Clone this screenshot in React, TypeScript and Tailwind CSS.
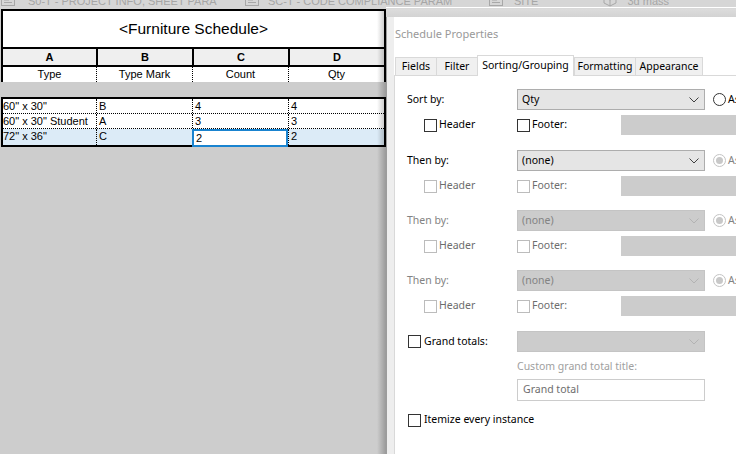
import React from 'react'

const UI = "font-['Noto_Sans','Open_Sans',sans-serif]"
const ARIAL = "font-['Liberation_Sans',Arial,sans-serif]"
const COLS = 'grid grid-cols-[93px_96px_96px_96px]'

function SheetIcon() {
  return (
    <svg width="14" height="14" viewBox="0 0 14 14" className="-mt-[7px] shrink-0">
      <rect x="0.5" y="0.5" width="13" height="12" fill="none" stroke="#a8a8a8" />
      <path d="M3 9.5h8M3 7h5" stroke="#a8a8a8" />
    </svg>
  )
}

function ViewTabs() {
  return (
    <div className={`${ARIAL} text-[11px] text-[#a6a6a6] whitespace-nowrap`}>
      <div className="h-[7px] bg-[#d6d6d6] flex items-start overflow-hidden">
        <div className="ml-[1px]"><SheetIcon /></div>
        <span className="ml-[13px] w-[189px] overflow-hidden leading-[11px] -mt-[4px]">S0-T - PROJECT INFO, SHEET PARAM</span>
        <div className="ml-[28px]"><SheetIcon /></div>
        <span className="ml-[9px] w-[193px] overflow-hidden leading-[11px] -mt-[4px]">SC-T - CODE COMPLIANCE PARAM</span>
        <div className="ml-[28px]"><SheetIcon /></div>
        <span className="ml-[11px] leading-[11px] -mt-[4px]">SITE</span>
        <div className="ml-[65px]">
          <svg width="14" height="14" viewBox="0 0 14 14" className="-mt-[7px]">
            <path d="M7 1 13 4 13 10 7 13 1 10 1 4Z M1 4 7 7 13 4 M7 7V13" fill="none" stroke="#a8a8a8" />
          </svg>
        </div>
        <span className="ml-[10px] leading-[11px] -mt-[4px]">3d mass</span>
      </div>
      <div className="h-[2px] flex">
        <div className="w-[386px] bg-[#d6d6d6]" />
        <div className="flex-1 border-t border-white bg-[#d9d9d9]" />
      </div>
    </div>
  )
}

function Schedule() {
  const rows = [
    ['60" x 30"', 'B', '4', '4'],
    ['60" x 30" Student', 'A', '3', '3'],
    ['72" x 36"', 'C', '2', '2'],
  ]
  return (
    <div className={`ml-px w-[385px] ${ARIAL} text-black`}>
      <div className="h-[40px] border-2 border-black bg-white flex items-center justify-center text-[15.5px]">
        &lt;Furniture Schedule&gt;
      </div>
      <div className={`${COLS} h-[16px] border-x-2 border-black bg-[#efefef] text-[11px] font-bold leading-[16px] text-center`}>
        {['A', 'B', 'C', 'D'].map((l, i) => (
          <div key={l} className={i ? 'border-l-2 border-black' : ''}>{l}</div>
        ))}
      </div>
      <div className={`${COLS} h-[17px] border-x-2 border-t-2 border-black bg-white text-[11px] leading-[15px] text-center`}>
        {['Type', 'Type Mark', 'Count', 'Qty'].map((l, i) => (
          <div key={l} className={i ? 'border-l border-dotted border-black' : ''}>{l}</div>
        ))}
      </div>
      <div className="h-[15px]" />
      <div className="border-2 border-black bg-white text-[11px]">
        {rows.map((r, ri) => {
          const last = ri === rows.length - 1
          return (
            <div
              key={ri}
              className={`${COLS} ${last ? 'h-[16px] bg-[#dcebf7]' : 'h-[15px] border-b border-dotted border-black'}`}
            >
              {r.map((c, ci) =>
                last && ci === 2 ? (
                  <div key={ci} className="border-2 border-[#1a84d0] bg-white pl-[2px] leading-[13px] pt-px">{c}</div>
                ) : (
                  <div key={ci} className={`leading-[14px] ${ci ? 'pl-[2px] border-l border-dotted border-black' : ''}`}>{c}</div>
                ),
              )}
            </div>
          )
        })}
      </div>
    </div>
  )
}

function Canvas() {
  return (
    <div className="relative w-[386px] shrink-0 bg-[#cdcdcd]">
      <Schedule />
      <div className="pointer-events-none absolute inset-y-0 right-0 w-[9px] bg-linear-to-r from-black/0 to-black/25" />
    </div>
  )
}

function Chevron({ off }: { off?: boolean }) {
  return (
    <svg width="10" height="6" viewBox="0 0 10 6" className="shrink-0">
      <path d="M0.5 0.5 5 5 9.5 0.5" fill="none" stroke={off ? '#b3b3b3' : '#404040'} />
    </svg>
  )
}

function Select({ value, off }: { value?: string; off?: boolean }) {
  return (
    <div
      className={`w-[188px] h-[21px] shrink-0 flex items-center justify-between pl-[4px] pr-[5px] border ${
        off ? 'bg-[#cccccc] border-[#c4c4c4] text-[#838383]' : 'bg-[#e5e5e5] border-[#adadad] text-black'
      }`}
    >
      <span>{value}</span>
      <Chevron off={off} />
    </div>
  )
}

function Box({ off }: { off?: boolean }) {
  return <div className={`w-[13px] h-[13px] shrink-0 border bg-white ${off ? 'border-[#bcbcbc]' : 'border-[#333333]'}`} />
}

function Radio({ off }: { off?: boolean }) {
  return off ? (
    <div className="w-[13px] h-[13px] shrink-0 rounded-full border border-[#c4c4c4] bg-white flex items-center justify-center">
      <div className="w-[7px] h-[7px] rounded-full bg-[#c8c8c8]" />
    </div>
  ) : (
    <div className="w-[13px] h-[13px] shrink-0 rounded-full border border-[#333333] bg-white" />
  )
}

function SortGroup({ label, value, labelOff, selectOff, boxesOff, radioOff }: {
  label: string
  value: string
  labelOff?: boolean
  selectOff?: boolean
  boxesOff?: boolean
  radioOff?: boolean
}) {
  return (
    <div className="flex flex-col">
      <div className="flex items-center h-[21px]">
        <span className={`w-[110px] shrink-0 ${labelOff ? 'text-[#838383]' : 'text-black'}`}>{label}</span>
        <Select value={value} off={selectOff} />
        <div className="ml-[8px] shrink-0"><Radio off={radioOff} /></div>
        <span className={`ml-[2px] shrink-0 ${radioOff ? 'text-[#838383]' : 'text-black'}`}>Ascending</span>
      </div>
      <div className={`flex items-center h-[20px] mt-[5px] ${boxesOff ? 'text-[#6d6d6d]' : 'text-black'}`}>
        <div className="w-[17px] shrink-0" />
        <div className="w-[93px] shrink-0 flex items-center gap-[2px]">
          <Box off={boxesOff} />
          <span>Header</span>
        </div>
        <div className="w-[104px] shrink-0 flex items-center gap-[2px]">
          <Box off={boxesOff} />
          <span>Footer:</span>
        </div>
        <div className="h-[20px] flex-1 bg-[#cccccc]" />
      </div>
    </div>
  )
}

function Page() {
  return (
    <div className="flex-1 border-t border-l border-[#d9d9d9] pl-[12px] pt-[13px] text-[10.5px] whitespace-nowrap overflow-hidden">
      <SortGroup label="Sort by:" value="Qty" />
      <div className="mt-[15px]">
        <SortGroup label="Then by:" value="(none)" boxesOff radioOff />
      </div>
      <div className="mt-[14px]">
        <SortGroup label="Then by:" value="(none)" labelOff selectOff boxesOff radioOff />
      </div>
      <div className="mt-[14px]">
        <SortGroup label="Then by:" value="(none)" labelOff selectOff boxesOff radioOff />
      </div>
      <div className="flex items-center h-[21px] mt-[15px]">
        <div className="w-[110px] shrink-0 flex items-center gap-[3px] pl-px">
          <Box />
          <span>Grand totals:</span>
        </div>
        <Select off />
      </div>
      <div className="ml-[110px] mt-[7px] h-[14px] leading-[14px] text-[#a0a0a0]">Custom grand total title:</div>
      <div className="ml-[110px] mt-[6px] w-[188px] h-[22px] border border-[#cccccc] flex items-center pl-[5px] text-[#6d6d6d]">
        Grand total
      </div>
      <div className="flex items-center h-[14px] mt-[12px] gap-[3px] pl-px">
        <Box />
        <span>Itemize every instance</span>
      </div>
    </div>
  )
}

function Tabs() {
  const tabs = [
    { label: 'Fields', w: 'w-[41px]' },
    { label: 'Filter', w: 'w-[41px]' },
    { label: 'Sorting/Grouping', w: 'w-[97px]', active: true },
    { label: 'Formatting', w: 'w-[61px]' },
    { label: 'Appearance', w: 'w-[68px]', last: true },
  ]
  return (
    <div className="relative z-10 h-[23px] pl-px flex items-end text-[10.5px] text-black whitespace-nowrap">
      {tabs.map((t) =>
        t.active ? (
          <div
            key={t.label}
            className={`${t.w} h-[21px] -mb-px flex items-center justify-center bg-white border-x border-t border-[#d9d9d9]`}
          >
            {t.label}
          </div>
        ) : (
          <div
            key={t.label}
            className={`${t.w} h-[18px] flex items-center justify-center bg-[#f0f0f0] border-t border-l border-[#d9d9d9] ${t.last ? 'border-r' : ''}`}
          >
            {t.label}
          </div>
        ),
      )}
    </div>
  )
}

function Dialog() {
  return (
    <div className={`flex-1 min-w-0 flex flex-col ${UI}`}>
      <div className="h-[8px] bg-linear-to-b from-[#dcdcdc] to-[#d3d3d3]" />
      <div className="flex flex-1 min-h-0">
        <div className="w-[8px] shrink-0 bg-[#eeeeee] border-l border-[#9c9c9c]" />
        <div className="flex-1 min-w-0 bg-white flex flex-col">
          <div className="h-[35px] shrink-0 flex items-center pl-px text-[11px] text-[#999999]">Schedule Properties</div>
          <Tabs />
          <Page />
        </div>
      </div>
    </div>
  )
}

export default function App() {
  return (
    <div className="w-[736px] h-[454px] overflow-hidden flex flex-col bg-[#cdcdcd]">
      <ViewTabs />
      <div className="flex flex-1 min-h-0">
        <Canvas />
        <Dialog />
      </div>
    </div>
  )
}
